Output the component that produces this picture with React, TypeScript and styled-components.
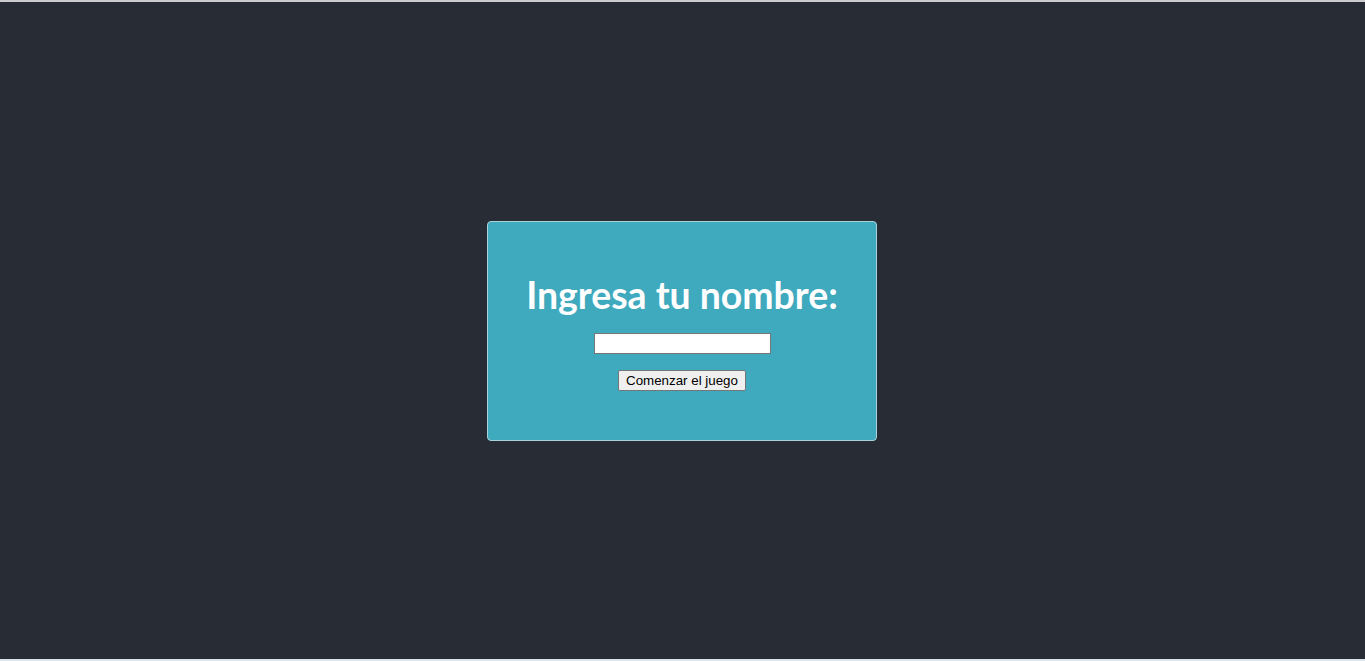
import React from 'react';
import styled, { createGlobalStyle } from 'styled-components';

const GlobalStyle = createGlobalStyle`
  html, body {
    margin: 0;
    padding: 0;
  }
  body {
    background-color: #282c34;
    font-family: 'Lato', 'Open Sans', sans-serif;
  }
`;

const Page = styled.div`
  box-sizing: border-box;
  height: 661px;
  display: flex;
  align-items: center;
  justify-content: center;
  border-top: 2px solid #c9cbce;
  border-bottom: 2px solid #dce6ec;
`;

const Card = styled.div`
  box-sizing: border-box;
  width: 390px;
  height: 220px;
  margin-right: 1px;
  background-color: #3fa9be;
  border: 1px solid #a9d3dc;
  border-radius: 4px;
  display: flex;
  flex-direction: column;
  align-items: center;
  justify-content: center;
`;

const Title = styled.h1`
  margin: 0 0 14px;
  font-size: 37.4px;
  line-height: 48px;
  font-weight: 700;
  color: #ffffff;
`;

const NameInput = styled.input`
  box-sizing: border-box;
  width: 177px;
  height: 21px;
  border: 1px solid #767676;
  background: #ffffff;
  padding: 1px 2px;
  font-family: 'Liberation Sans', Arial, sans-serif;
  font-size: 13.33px;
`;

const StartButton = styled.button`
  box-sizing: border-box;
  margin-top: 16px;
  height: 21px;
  padding: 1px 7px;
  border: 1px solid #767676;
  border-radius: 2px;
  background: #efefef;
  color: #000000;
  font-family: 'Liberation Sans', Arial, sans-serif;
  font-size: 13.33px;
  line-height: 17px;
`;

const App: React.FC = () => {
  return (
    <>
      <GlobalStyle />
      <Page>
        <Card>
          <Title>Ingresa tu nombre:</Title>
          <NameInput type="text" />
          <StartButton>Comenzar el juego</StartButton>
        </Card>
      </Page>
    </>
  );
};

export default App;
